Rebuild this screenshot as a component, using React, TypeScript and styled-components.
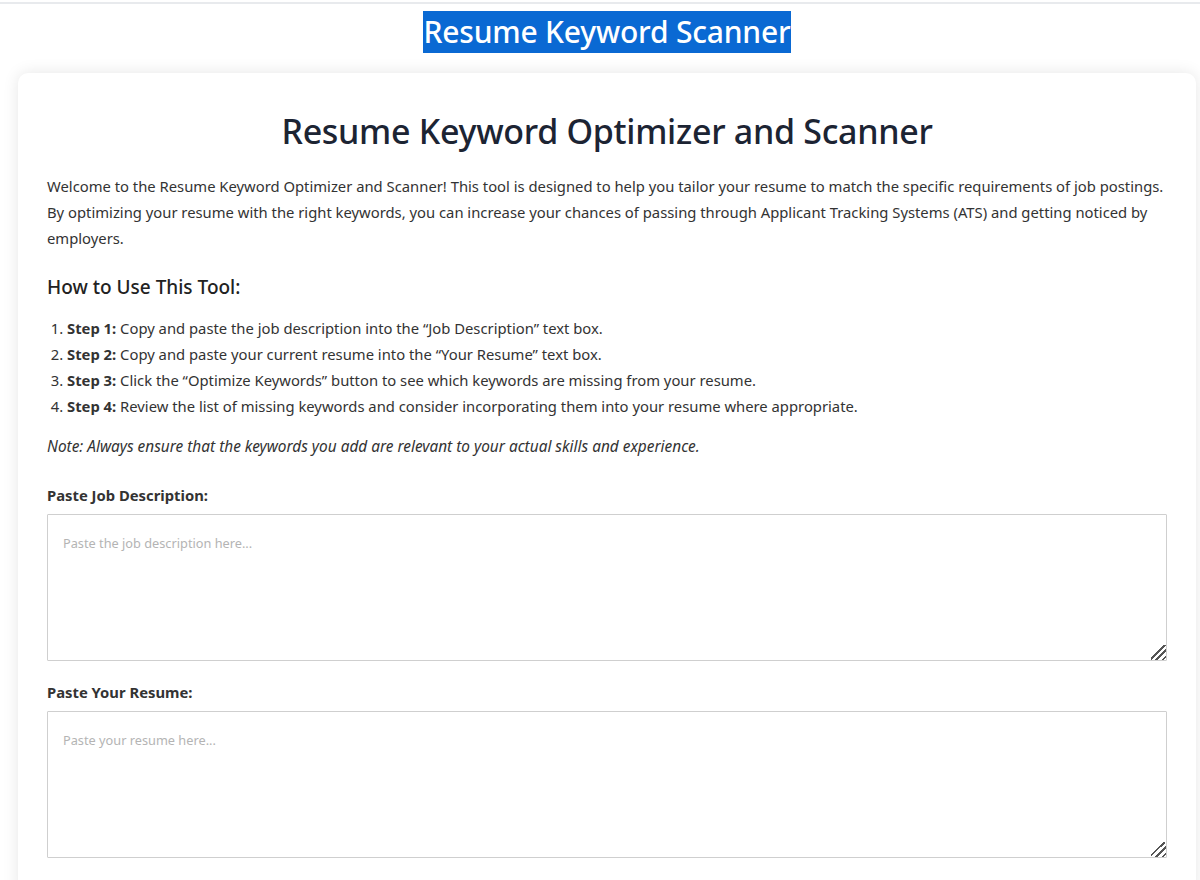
import React from "react";
import styled, { createGlobalStyle } from "styled-components";

const Global = createGlobalStyle`
  html, body { margin: 0; padding: 0; background: #ffffff; overflow: hidden; }
  body { font-family: "Noto Sans", "Open Sans", sans-serif; color: #333; }
`;

const Page = styled.div`
  border-top: 2px solid #e8eaed;
  margin-top: 2px;
  padding: 0 4px 40px 18px;
  display: flex;
  flex-direction: column;
  align-items: center;
`;

const TopTitle = styled.div`
  margin-top: 7px;
  height: 42px;
  display: flex;
  align-items: center;
  justify-content: center;
`;

const Selected = styled.span`
  background: #0a69d3;
  color: #fff;
  font-size: 30px;
  font-weight: 500;
  line-height: 42px;
  padding: 0 1px;
  letter-spacing: -0.2px;
`;

const Card = styled.main`
  margin-top: 20px;
  width: 1178px;
  box-sizing: border-box;
  background: #fff;
  border-radius: 10px;
  box-shadow: 0 0 16px rgba(0, 0, 0, 0.1);
  padding: 34px 29px 40px;
`;

const Title = styled.h1`
  margin: 0;
  text-align: center;
  font-size: 34px;
  font-weight: 500;
  color: #1c2433;
  line-height: 48px;
  letter-spacing: -0.3px;
`;

const Intro = styled.p`
  margin: 18px 0 0;
  font-size: 14.8px;
  line-height: 26px;
  color: #333;
`;

const SectionHeading = styled.h2`
  margin: 23px 0 0;
  font-size: 19px;
  font-weight: 500;
  color: #222;
  line-height: 26px;
`;

const Steps = styled.ol`
  margin: 15px 0 0;
  padding-left: 20px;
  font-size: 14.8px;
  line-height: 26px;
  color: #333;
`;

const Note = styled.p`
  margin: 15px 0 0;
  font-size: 15.4px;
  line-height: 26px;
  font-style: italic;
  color: #333;
`;

const Field = styled.div`
  display: flex;
  flex-direction: column;
  margin-top: ${(p: { $first?: boolean }) => (p.$first ? "22px" : "18px")};
`;

const Label = styled.label`
  font-size: 14.8px;
  font-weight: 700;
  color: #333;
  line-height: 26px;
  margin-bottom: 6px;
`;

const TextBox = styled.textarea`
  box-sizing: border-box;
  width: 100%;
  height: 147px;
  border: 1px solid #cfcfcf;
  border-radius: 1px;
  padding: 18px 15px 15px;
  font-family: "Noto Sans", "Open Sans", sans-serif;
  font-size: 12.75px;
  line-height: 20px;
  color: #333;
  resize: vertical;
  outline: none;
  &::placeholder { color: #b4b4b4; }
  &::-webkit-resizer {
    background: linear-gradient(
      to bottom right,
      transparent 0 42%,
      #555 42% 50%,
      transparent 50% 63%,
      #555 63% 71%,
      transparent 71% 84%,
      #555 84% 92%,
      transparent 92%
    );
  }
`;

export default function App() {
  return (
    <>
      <Global />
      <Page>
        <TopTitle>
          <Selected>Resume Keyword Scanner</Selected>
        </TopTitle>
        <Card>
          <Title>Resume Keyword Optimizer and Scanner</Title>
          <Intro>
            Welcome to the Resume Keyword Optimizer and Scanner! This tool is designed to help you
            tailor your resume to match the specific requirements of job postings. By optimizing
            your resume with the right keywords, you can increase your chances of passing through
            Applicant Tracking Systems (ATS) and getting noticed by employers.
          </Intro>
          <SectionHeading>How to Use This Tool:</SectionHeading>
          <Steps>
            <li>
              <strong>Step 1:</strong> Copy and paste the job description into the “Job
              Description” text box.
            </li>
            <li>
              <strong>Step 2:</strong> Copy and paste your current resume into the “Your Resume”
              text box.
            </li>
            <li>
              <strong>Step 3:</strong> Click the “Optimize Keywords” button to see which keywords
              are missing from your resume.
            </li>
            <li>
              <strong>Step 4:</strong> Review the list of missing keywords and consider
              incorporating them into your resume where appropriate.
            </li>
          </Steps>
          <Note>
            Note: Always ensure that the keywords you add are relevant to your actual skills and
            experience.
          </Note>
          <Field $first>
            <Label htmlFor="job">Paste Job Description:</Label>
            <TextBox id="job" placeholder="Paste the job description here..." />
          </Field>
          <Field>
            <Label htmlFor="resume">Paste Your Resume:</Label>
            <TextBox id="resume" placeholder="Paste your resume here..." />
          </Field>
        </Card>
      </Page>
    </>
  );
}
